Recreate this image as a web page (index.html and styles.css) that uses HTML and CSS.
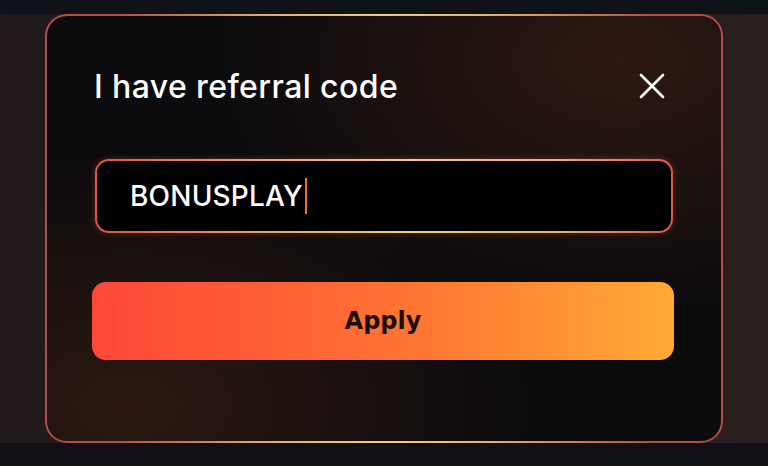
FILE: index.html
```html
<!DOCTYPE html>
<html lang="en">
<head>
<meta charset="utf-8">
<title>Referral code</title>
<link rel="stylesheet" href="styles.css">
</head>
<body>
<div class="stage">
  <div class="modal">
    <div class="header">
      <h1 class="title">I have referral code</h1>
      <button class="close" aria-label="Close">
        <svg width="26" height="26" viewBox="0 0 26 26"><path d="M2 2 L24 24 M24 2 L2 24" stroke="#fff" stroke-width="2.6" stroke-linecap="round" fill="none"/></svg>
      </button>
    </div>
    <div class="field">
      <span class="value">BONUSPLAY</span><span class="caret"></span>
    </div>
    <button class="apply">Apply</button>
  </div>
</div>
</body>
</html>
```
FILE: styles.css
```css
* { box-sizing: border-box; }
html, body { margin: 0; padding: 0; }
body {
  width: 768px;
  height: 466px;
  overflow: hidden;
  font-family: Inter, "Noto Sans", sans-serif;
  background:
    linear-gradient(180deg, #10121a 0, #10121a 14px, transparent 14px, transparent 443px, #121016 443px, #121016 100%),
    linear-gradient(90deg, #221a1c 0%, #1a1517 50%, #2a201f 100%);
}
.stage {
  padding: 14px 45px 0 45px;
}
.modal {
  width: 678px;
  height: 429px;
  border-radius: 22px;
  border: 2px solid transparent;
  background:
    radial-gradient(ellipse 60% 60% at 85% 10%, rgba(60, 30, 18, 0.7), transparent 100%) padding-box,
    radial-gradient(ellipse 60% 60% at 12% 92%, rgba(58, 30, 18, 0.7), transparent 100%) padding-box,
    linear-gradient(#0c0b0e, #0c0b0e) padding-box,
    radial-gradient(ellipse 40% 6px at 50% 0%, #f2d890 0%, #e0b078 45%, rgba(178, 78, 72, 0) 100%) border-box,
    radial-gradient(ellipse 40% 6px at 50% 100%, #f2d890 0%, #e0b078 45%, rgba(178, 78, 72, 0) 100%) border-box,
    linear-gradient(#b24e48, #b24e48) border-box;
  padding: 48px 48px 0 47px;
  display: flex;
  flex-direction: column;
}
.header {
  height: 44px;
  display: flex;
  align-items: center;
  justify-content: space-between;
}
.title {
  margin: 0;
  color: #ffffff;
  font-size: 32px;
  font-weight: 500;
  letter-spacing: 0.4px;
}
.close {
  background: none;
  border: none;
  padding: 0;
  margin-right: 8px;
  width: 26px;
  height: 26px;
  display: flex;
}
.field {
  margin-top: 51px;
  height: 74px;
  width: 578px;
  margin-left: 1px;
  border-radius: 14px;
  border: 2px solid transparent;
  background:
    linear-gradient(#000, #000) padding-box,
    linear-gradient(90deg, #e0553f 0%, #e8986a 25%, #f0cf7e 55%, #e6b070 80%, #dc5a4c 100%) border-box;
  box-shadow: 0 0 6px rgba(220, 90, 60, 0.35);
  display: flex;
  align-items: center;
  padding-left: 33px;
}
.value {
  color: #ffffff;
  font-size: 28px;
  font-weight: 500;
  letter-spacing: 0.2px;
}
.caret {
  width: 2px;
  height: 36px;
  background: #f07030;
  margin-left: 2px;
}
.apply {
  margin-top: 49px;
  margin-left: -2px;
  width: 582px;
  height: 78px;
  border: none;
  border-radius: 14px;
  background: linear-gradient(90deg, #ff4838 0%, #ff5e35 30%, #ff7a33 60%, #ffaa36 100%);
  color: #1a0f0a;
  font-family: "DejaVu Sans", sans-serif;
  font-weight: 700;
  font-size: 24px;
  display: flex;
  align-items: center;
  justify-content: center;
  padding: 0;
}
```
